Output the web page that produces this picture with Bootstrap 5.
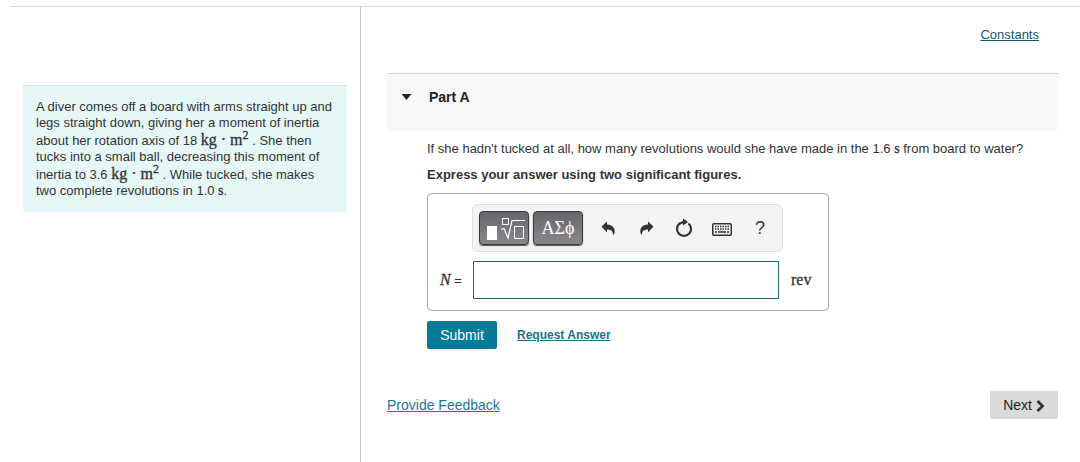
<!DOCTYPE html>
<html lang="en">
<head>
<meta charset="utf-8">
<meta name="viewport" content="width=device-width, initial-scale=1">
<title>Part A</title>
<link href="https://cdn.jsdelivr.net/npm/bootstrap@5.3.0/dist/css/bootstrap.min.css" rel="stylesheet">
<style>
  body { font-family: "Liberation Sans", Arial, sans-serif; font-size: 13px; line-height: 16px; color: #333; background: #fff; }
  .workspace { margin-left: 10px; margin-top: 6px; border-top: 1px solid #d4d4d4; }
  .split { min-height: calc(100vh - 7px); margin-left: -10px; }
  .problem-pane { padding: 78px 13px 24px 23px; }
  .problem-text { background: #e6f7f7; border-top: 1px solid #d3e2e2; padding: 13px; }
  .math { font-family: "Liberation Serif", serif; font-size: 14px; line-height: 1; -webkit-text-stroke: 0.3px; }
  .unit { font-size: 16px; line-height: 18px; }
  .unit sup { font-size: 12px; line-height: 0; top: -6px; }
  .answer-pane { padding: 20px 22px 20px 26px; border-left: 1px solid #c3c6c9; }
  .constants { padding-right: 19px; }
  a { color: #1f6f8b; }
  .constants a { color: #17596a; }
  .part-head { margin-top: 30px; height: 58px; background: #f8f8f8; border-top: 1px solid #d4d4d4; padding: 0 14px 11px; gap: 17px; font-size: 14px; color: #222; }
  .part-body { padding: 10px 0 0 40px; }
  .instruction { margin-top: 10px; }
  .answer-box { width: 402px; margin-top: 10px; border: 1px solid #a9a9a9; border-radius: 5px; padding: 10px 12px 11px; }
  .label-col { width: 33px; }
  .tools { width: 311px; height: 48px; margin-left: 32px; padding-left: 6px; background: #f4f4f4; border: 1px solid #dfdfdf; border-radius: 6px; }
  .tool-dark { width: 50px; height: 34px; border: 1px solid #3b3b3e; border-radius: 4px; background: linear-gradient(#67676b, #87878c); color: #fff; box-shadow: 0 1px 1px #555; }
  .tool-dark.greek { font-family: "Liberation Serif", serif; font-size: 18px; margin-left: 4px; }
  .tool-set { margin-left: 6px; }
  .tool-plain { width: 38px; height: 34px; border: 0; background: none; color: #333; font-size: 18px; }
  .answer-input { width: 306px; height: 38px; border: 1px solid #1c6b72; border-radius: 0; }
  .input-row { margin-top: 9px; }
  .submit-row { margin-top: 10px; font-size: 12px; }
  .btn-go { background: #057a99; color: #fff; font-size: 14px; width: 70px; height: 28px; border-radius: 2px; }
  .btn-next { background: #d9d9d9; color: #222; font-size: 14px; width: 68px; height: 28px; border-radius: 1px; }
  .feedback { font-size: 14px; color: #1b7792; }
  .foot { margin-top: 42px; }
</style>
</head>
<body>
<main class="workspace">
  <div class="row g-0 split">
    <aside class="col-4 problem-pane">
      <p class="problem-text mb-0">A diver comes off a board with arms straight up and legs straight down, giving her a moment of inertia about her rotation axis of 18 <span class="math unit text-nowrap">kg · m<sup>2</sup></span> . She then tucks into a small ball, decreasing this moment of inertia to 3.6 <span class="math unit text-nowrap">kg · m<sup>2</sup></span> . While tucked, she makes two complete revolutions in 1.0 <span class="math">s</span>.</p>
    </aside>
    <section class="col-8 answer-pane">
      <div class="constants text-end"><a href="#constants">Constants</a></div>
      <div class="part-head d-flex align-items-center fw-bold">
        <svg width="11" height="6" viewBox="0 0 11 6" aria-hidden="true"><path d="M0.500 0h10L5.500 6z" fill="#222"/></svg>
        <span>Part A</span>
      </div>
      <div class="part-body">
        <p class="mb-0">If she hadn't tucked at all, how many revolutions would she have made in the 1.6 <span class="math">s</span> from board to water?</p>
        <p class="instruction fw-bold mb-0">Express your answer using two significant figures.</p>
        <div class="answer-box">
          <div class="tools d-flex align-items-center">
            <button type="button" class="tool-dark p-0 d-flex align-items-center justify-content-center" aria-label="Templates">
              <svg width="42" height="26" viewBox="0 0 42 26" fill="none" stroke="#fff"><path d="M4 11h10v14H4z" fill="#fff" stroke="none"/><path d="M19.500 3.500h6v6h-6zM31.500 11.500h9v12h-9z"/><path d="M18 14.500l3-1 4 9.500 4-17.500h13" stroke-width="1.200"/></svg>
            </button>
            <button type="button" class="tool-dark greek p-0" aria-label="Symbols">ΑΣϕ</button>
            <div class="tool-set d-flex align-items-center">
              <button type="button" class="tool-plain p-0" aria-label="Undo">
                <svg width="15" height="15" viewBox="0 0 15 15"><path d="M0.500 5.500L6 0.500v3c5.500.2 8.500 3.500 7.500 8.500l-1.500 2.500c.3-4-1.500-6-6-6v3z" fill="#333"/></svg>
              </button>
              <button type="button" class="tool-plain p-0" aria-label="Redo">
                <svg width="15" height="15" viewBox="0 0 15 15"><path d="M14.500 5.500L9 0.500v3C3.500 3.700.5 7 1.500 12L3 14.500c-.3-4 1.500-6 6-6v3z" fill="#333"/></svg>
              </button>
              <button type="button" class="tool-plain p-0" aria-label="Reset">
                <svg width="18" height="20" viewBox="0 0 18 20"><path d="M5 5.200a7 7 0 1 0 8.500 .3" fill="none" stroke="#333" stroke-width="2.200"/><path d="M8 0.500l5 3.500-5 3.500V5.200L4.500 7 3.500 5 8 3z" fill="#333"/></svg>
              </button>
              <button type="button" class="tool-plain p-0" aria-label="Keyboard">
                <svg width="20" height="18" viewBox="0 0 20 18"><rect x="0.750" y="4.750" width="18.500" height="11.500" rx="1" fill="#f4f4f4" stroke="#333" stroke-width="1.500"/><path d="M3 7.500h14M3 10h14" stroke="#333" stroke-width="1.500" stroke-dasharray="1.500 1"/><path d="M3 13h2M6 13h8M15 13h2" stroke="#333" stroke-width="1.500"/></svg>
              </button>
              <button type="button" class="tool-plain p-0" aria-label="Help">?</button>
            </div>
          </div>
          <div class="input-row d-flex align-items-center">
            <label for="answer" class="label-col text-nowrap"><i class="math unit">N</i> =</label>
            <input id="answer" type="text" class="answer-input" autocomplete="off">
            <span class="math unit ms-2 ps-1">rev</span>
          </div>
        </div>
        <div class="submit-row d-flex align-items-center">
          <button type="submit" class="btn btn-go p-0">Submit</button>
          <a href="#request" class="fw-bold ms-3 ps-1">Request Answer</a>
        </div>
      </div>
      <div class="foot d-flex align-items-center justify-content-between">
        <a href="#feedback" class="feedback">Provide Feedback</a>
        <button type="button" class="btn btn-next p-0">Next <svg width="9" height="12" viewBox="0 0 9 12"><path d="M1.500 1l5 5-5 5" fill="none" stroke="#333" stroke-width="2.800"/></svg></button>
      </div>
    </section>
  </div>
</main>
<script src="https://cdn.jsdelivr.net/npm/bootstrap@5.3.0/dist/js/bootstrap.bundle.min.js"></script>
</body>
</html>
